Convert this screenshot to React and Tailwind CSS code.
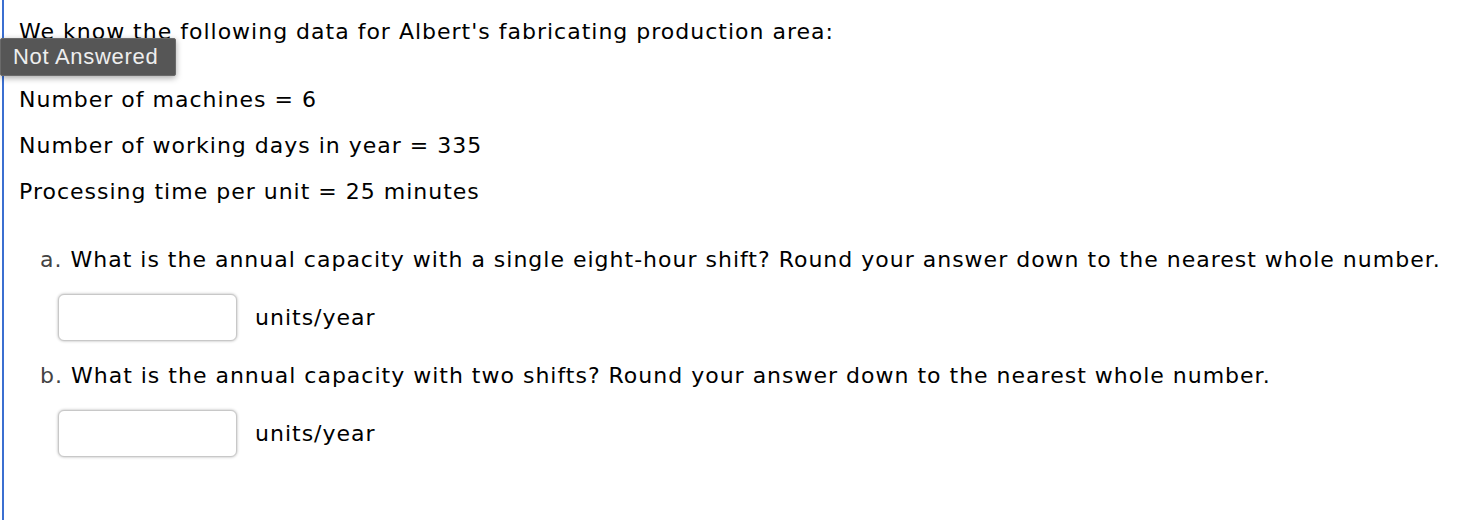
export default function App() {
  return (
    <div className="w-[1470px] h-[520px] bg-white overflow-hidden">
      <div className="relative ml-[2px] h-full border-l-2 border-[#3b6fd1] pl-[15px] pt-[17px] text-[22px] leading-[30px] tracking-[1px] text-black font-['DejaVu_Sans',Verdana,sans-serif]">
        <p>We know the following data for Albert's fabricating production area:</p>

        {/* status tag */}
        <div className="absolute left-[-4px] top-[38px] w-[176px] h-[38px] pl-[12px] flex items-center bg-[#565656] border border-[#6a6a6a] rounded-[2px] shadow-[0_2px_6px_rgba(0,0,0,0.35)] text-[#eeeeee] text-[22px] tracking-[0.7px] font-['Liberation_Sans',Arial,sans-serif]">
          Not Answered
        </div>

        <div className="mt-[38px] space-y-[16px]">
          <p>Number of machines = 6</p>
          <p>Number of working days in year = 335</p>
          <p>Processing time per unit = 25 minutes</p>
        </div>

        <div className="mt-[38px]">
          <p className="pl-[21px]">
            <span className="text-[#444]">a.</span> What is the annual capacity with a single eight-hour shift? Round your answer down to the nearest whole number.
          </p>
          <div className="flex items-center mt-[19px] pl-[39px]">
            <div className="w-[179px] h-[47px] bg-white rounded-[6px] border border-[#c8c8c8] shadow-[0_0_3px_rgba(0,0,0,0.3)]" />
            <span className="ml-[18px]">units/year</span>
          </div>
        </div>

        <div className="mt-[20px]">
          <p className="pl-[21px]">
            <span className="text-[#444]">b.</span> What is the annual capacity with two shifts? Round your answer down to the nearest whole number.
          </p>
          <div className="flex items-center mt-[19px] pl-[39px]">
            <div className="w-[179px] h-[47px] bg-white rounded-[6px] border border-[#c8c8c8] shadow-[0_0_3px_rgba(0,0,0,0.3)]" />
            <span className="ml-[18px]">units/year</span>
          </div>
        </div>
      </div>
    </div>
  );
}
